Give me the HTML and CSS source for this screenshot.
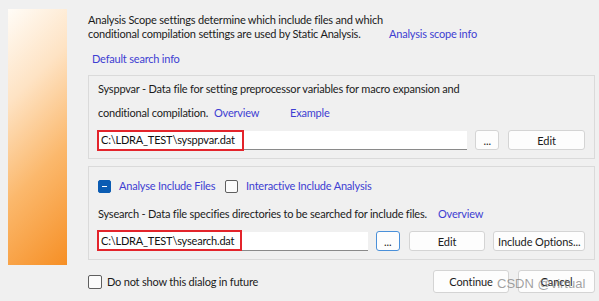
FILE: index.html
```html
<!DOCTYPE html>
<html>
<head>
<meta charset="utf-8">
<link rel="stylesheet" href="styles.css">
</head>
<body>
<div class="dialog">
  <aside class="banner"></aside>
  <main class="content">
    <div class="intro">
      <p class="intro-text">Analysis Scope settings determine which include files and which<br>conditional compilation settings are used by Static Analysis.</p>
      <a class="link intro-link">Analysis scope info</a>
    </div>
    <a class="link default-link">Default search info</a>

    <section class="group group-ppvar">
      <p class="line">Sysppvar - Data file for setting preprocessor variables for macro expansion and</p>
      <p class="line line-second"><span class="cell cell-cond">conditional compilation.</span><a class="link cell cell-overview">Overview</a><a class="link">Example</a></p>
      <div class="file-row">
        <div class="field field-ppvar"><span class="field-text">C:\LDRA_TEST\sysppvar.dat</span><span class="mark mark-ppvar"></span></div>
        <button class="btn btn-dots">...</button>
        <button class="btn btn-edit">Edit</button>
      </div>
    </section>

    <section class="group group-search">
      <div class="check-row">
        <span class="check checked"></span><span class="link check-label check-label-first">Analyse Include Files</span>
        <span class="check"></span><span class="link check-label">Interactive Include Analysis</span>
      </div>
      <p class="line line-search"><span class="cell cell-search">Sysearch - Data file specifies directories to be searched for include files.</span><a class="link">Overview</a></p>
      <div class="file-row">
        <div class="field field-search"><span class="field-text">C:\LDRA_TEST\sysearch.dat</span><span class="mark mark-search"></span></div>
        <button class="btn btn-dots focused">...</button>
        <button class="btn btn-edit">Edit</button>
        <button class="btn btn-options">Include Options...</button>
      </div>
    </section>

    <footer class="footer">
      <span class="check footer-check"></span><span class="footer-label">Do not show this dialog in future</span>
      <button class="btn btn-continue">Continue</button>
      <button class="btn btn-cancel">Cancel</button>
      <span class="watermark">CSDN @virtual</span>
    </footer>
  </main>
</div>
</body>
</html>
```

FILE: styles.css
```css
html, body {
  margin: 0;
  padding: 0;
  background: #f0f0f0;
}
body {
  width: 599px;
  height: 301px;
  overflow: hidden;
  font-family: Lato, "Noto Sans", sans-serif;
  font-size: 11px;
  letter-spacing: -0.2px;
  color: #1b1b1b;
  white-space: nowrap;
}
p { margin: 0; }
.dialog {
  display: flex;
  align-items: flex-start;
  padding: 9px 0 0 8px;
}
.banner {
  width: 59px;
  height: 256px;
  flex: none;
  background: linear-gradient(135deg, #fffcf7 0%, #fee3c4 30%, #fbb86c 62%, #f68f25 100%);
}
.content {
  margin-left: 21px;
  width: 507px;
  display: flex;
  flex-direction: column;
  position: relative;
}
.link {
  color: #3e3ed2;
  text-decoration: none;
}
.intro {
  display: flex;
  align-items: flex-end;
  margin-top: 4px;
  line-height: 14px;
}
.intro-text { width: 301px; }
.default-link {
  margin: 11px 0 0 4px;
  line-height: 14px;
}
.group {
  border: 1px solid #dadada;
  margin-top: 9px;
  padding: 0 9px 8px 9px;
}
.group-ppvar { padding-top: 6px; }
.line { line-height: 14px; }
.line-second { margin-top: 10px; }
.cell { display: inline-block; }
.cell-cond { width: 116px; }
.cell-overview { width: 76px; }
.cell-search { width: 340px; }
.file-row {
  display: flex;
  align-items: center;
  height: 20px;
  margin-top: 10px;
}
.field {
  position: relative;
  height: 19px;
  background: #ffffff;
  border-bottom: 1px solid #8a8a8a;
  display: flex;
  align-items: center;
  padding-left: 3px;
  box-sizing: border-box;
  color: #111;
}
.field-ppvar { width: 370px; }
.field-search { width: 271px; }
.mark {
  position: absolute;
  left: -1px;
  top: -1px;
  height: 21px;
  border: 2px solid #e3242b;
  box-sizing: border-box;
}
.mark-ppvar { width: 147px; }
.mark-search { width: 145px; top: -2px; }
.btn {
  font-family: inherit;
  font-size: 11px;
  letter-spacing: -0.1px;
  color: #1b1b1b;
  background: #fdfdfd;
  border: 1px solid #d4d4d4;
  border-radius: 3px;
  height: 20px;
  padding: 0;
  box-sizing: border-box;
  white-space: nowrap;
}
.btn-dots { width: 24px; margin-left: 8px; }
.btn-dots.focused { border-color: #4a90d9; }
.btn-edit { width: 77px; margin-left: 9px; }
.btn-options { width: 92px; margin-left: 8px; }
.group-search { margin-top: 7px; padding-top: 12px; }
.check-row {
  display: flex;
  align-items: center;
  height: 14px;
  line-height: 14px;
}
.check {
  width: 13px;
  height: 13px;
  box-sizing: border-box;
  border: 1px solid #5f5f5f;
  border-radius: 2px;
  background: #fbfbfb;
  flex: none;
  position: relative;
}
.check.checked {
  background: #0b5cb3;
  border-color: #0b5cb3;
}
.check.checked::after {
  content: "";
  position: absolute;
  left: 3px;
  top: 5px;
  width: 5px;
  height: 1px;
  background: #ffffff;
}
.check-label { margin-left: 8px; }
.check-label-first { width: 98px; margin-right: 8px; }
.line-search { margin-top: 14px; }
.footer {
  display: flex;
  align-items: center;
  margin-top: 10px;
  height: 23px;
  position: relative;
}
.footer-check { width: 14px; height: 14px; }
.footer-label { margin-left: 5px; }
.btn-continue { width: 76px; height: 23px; margin-left: auto; }
.btn-cancel { width: 77px; height: 23px; margin-left: 9px; }
.watermark {
  position: absolute;
  left: 409px;
  top: 6px;
  font-family: "Liberation Sans", sans-serif;
  font-size: 13px;
  letter-spacing: 0;
  color: rgba(120, 120, 120, 0.7);
  white-space: nowrap;
}
```
